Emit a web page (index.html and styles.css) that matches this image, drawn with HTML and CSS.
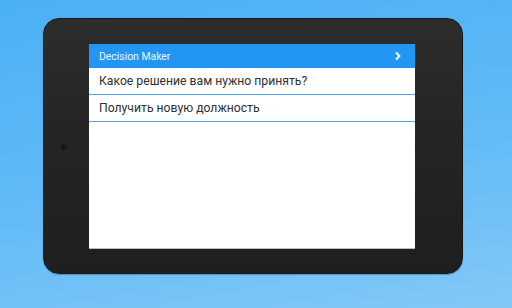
FILE: index.html
```html
<!DOCTYPE html>
<html lang="ru">
<head>
    <meta charset="UTF-8">
    <meta name="viewport" content="width=device-width, initial-scale=1.0">
    <title>Decision Maker</title>
    <link rel="stylesheet" href="styles.css">
</head>
<body>
    <div class="tablet">
        <div class="bezel-left">
            <span class="camera"></span>
        </div>
        <div class="screen">
            <div class="app-bar">
                <span class="app-title">Decision Maker</span>
                <svg class="chevron" width="8" height="10" viewBox="0 0 8 10">
                    <path d="M2 1.5 L5.5 5 L2 8.5" fill="none" stroke="#fff" stroke-width="1.8"/>
                </svg>
            </div>
            <div class="row">Какое решение вам нужно принять?</div>
            <div class="row">Получить новую должность</div>
        </div>
    </div>
</body>
</html>
```

FILE: styles.css
```css
/* Reset */
* {
    margin: 0;
    padding: 0;
    box-sizing: border-box;
}

body {
    width: 512px;
    height: 308px;
    overflow: hidden;
    font-family: Roboto, "Noto Sans", sans-serif;
    background: linear-gradient(170deg, #4ab0f5 0%, #62bbf6 55%, #82c8f7 100%);
    padding: 18px 0 0 43px;
}

/* Device frame */
.tablet {
    display: flex;
    width: 420px;
    height: 256px;
    padding: 25px 47px 24px 0;
    border-radius: 16px;
    background: linear-gradient(180deg, #2d2d2d 0%, #242424 50%, #1f1f1f 100%);
    border: 1px solid #181818;
    box-shadow: 0 1px 1px rgba(0, 0, 0, 0.25);
}

.bezel-left {
    width: 45px;
    display: flex;
    align-items: center;
    padding-left: 17px;
}

.camera {
    width: 6px;
    height: 6px;
    border-radius: 50%;
    background: #161616;
    box-shadow: 0 0 1px #3a3a3a;
}

/* Screen */
.screen {
    flex: 1;
    background: #ffffff;
    border-bottom: 1px solid #bdbdbd;
}

.app-bar {
    height: 24px;
    background: #2196f3;
    display: flex;
    align-items: center;
    justify-content: space-between;
    padding: 0 13px 0 10px;
    color: #eef6fe;
    font-size: 10.4px;
}

.chevron {
    display: block;
}

.row {
    height: 27px;
    display: flex;
    align-items: center;
    padding-left: 10px;
    font-size: 12.2px;
    color: #303030;
    border-bottom: 1px solid #4aa3e8;
}

.row:first-of-type {
    border-top: 1px solid #e6e6e6;
}
```
